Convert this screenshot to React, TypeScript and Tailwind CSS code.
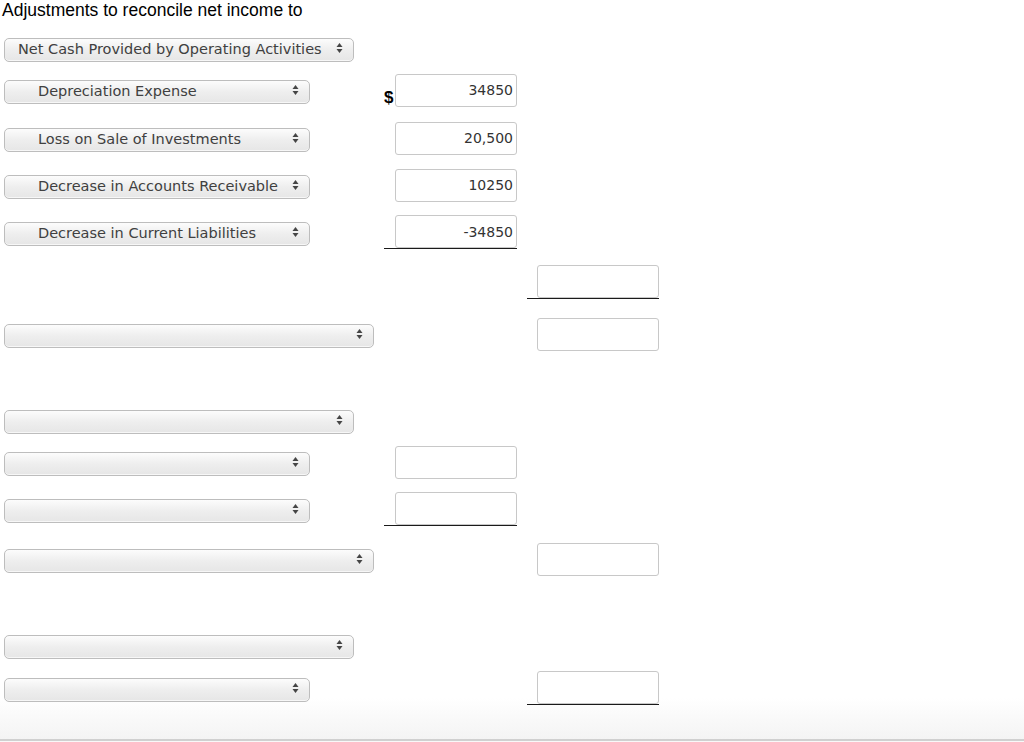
type Cell = { value?: string; dollar?: boolean; line?: boolean }

interface RowSpec {
  mt: string
  select?: { w: string; label?: string; indent?: boolean }
  c1?: Cell
  c2?: Cell
}

const ROWS: RowSpec[] = [
  { mt: 'mt-[10px]', select: { w: 'w-[350px]', label: 'Net Cash Provided by Operating Activities' } },
  { mt: 'mt-[6px]', select: { w: 'w-[306px]', label: 'Depreciation Expense', indent: true }, c1: { value: '34850', dollar: true } },
  { mt: 'mt-[12px]', select: { w: 'w-[306px]', label: 'Loss on Sale of Investments', indent: true }, c1: { value: '20,500' } },
  { mt: 'mt-[11px]', select: { w: 'w-[306px]', label: 'Decrease in Accounts Receivable', indent: true }, c1: { value: '10250' } },
  { mt: 'mt-[11px]', select: { w: 'w-[306px]', label: 'Decrease in Current Liabilities', indent: true }, c1: { value: '-34850', line: true } },
  { mt: 'mt-[14px]', c2: { line: true } },
  { mt: 'mt-[16px]', select: { w: 'w-[370px]' }, c2: {} },
  { mt: 'mt-[50px]', select: { w: 'w-[350px]' } },
  { mt: 'mt-[6px]', select: { w: 'w-[306px]' }, c1: {} },
  { mt: 'mt-[11px]', select: { w: 'w-[306px]' }, c1: { line: true } },
  { mt: 'mt-[14px]', select: { w: 'w-[370px]' }, c2: {} },
  { mt: 'mt-[50px]', select: { w: 'w-[350px]' } },
  { mt: 'mt-[7px]', select: { w: 'w-[306px]' }, c2: { line: true } },
]

function Arrows() {
  return (
    <svg width="7" height="11" viewBox="0 0 7 11" className="pointer-events-none absolute right-[11px] top-1/2 -translate-y-1/2">
      <path d="M0.5 4.5 L3.5 0.5 L6.5 4.5 Z" fill="#454545" />
      <path d="M0.5 6.5 L6.5 6.5 L3.5 10.5 Z" fill="#454545" />
    </svg>
  )
}

function FakeSelect({ w, label, indent }: { w: string; label?: string; indent?: boolean }) {
  return (
    <div className={`relative h-[24px] ${w}`}>
      <select
        defaultValue={label ?? ''}
        className={`h-full w-full appearance-none rounded-[5px] border border-[#bdbdbd] bg-gradient-to-b from-[#fcfcfc] via-[#eeeeee] to-[#e6e6e6] text-[14.5px] text-[#404040] shadow-[inset_0_-1px_0_#f7f7f7] outline-none font-['DejaVu_Sans',Verdana,sans-serif] ${indent ? 'pl-[33px]' : 'pl-[13px]'}`}
      >
        <option value={label ?? ''}>{label ?? ''}</option>
      </select>
      <Arrows />
    </div>
  )
}

function Box({ value }: { value?: string }) {
  return (
    <input
      readOnly
      defaultValue={value ?? ''}
      className="h-[33px] w-[122px] rounded-[3px] border border-[#c8c8c8] bg-white pr-[3px] text-right text-[14px] text-[#333] outline-none font-['DejaVu_Sans',Verdana,sans-serif]"
    />
  )
}

function AmountCell({ cell, w }: { cell?: Cell; w: string }) {
  if (!cell) return <div className={`shrink-0 ${w}`} />
  return (
    <div className={`flex shrink-0 items-end justify-between ${w} ${cell.line ? 'border-b border-[#1a1a1a]' : ''}`}>
      <span className="text-[17px] leading-[19px] font-bold text-black font-['Liberation_Sans',Arial,sans-serif]">
        {cell.dollar ? '$' : ''}
      </span>
      <Box value={cell.value} />
    </div>
  )
}

export default function App() {
  return (
    <div className="h-[742px] w-full overflow-hidden bg-[linear-gradient(to_bottom,#ffffff_0px,#ffffff_698px,#f4f4f4_739px,#d0d0d0_739px,#d0d0d0_741px,#f8f8f8_741px)]">
      <div className="h-[20px] pl-[2px] text-[17.5px] leading-[20px] text-black font-['Liberation_Sans',Arial,sans-serif]">
        Adjustments to reconcile net income to
      </div>
      {ROWS.map((r, i) => (
        <div key={i} className={`flex h-[36px] items-center pl-[4px] ${r.mt}`}>
          <div className="w-[380px] shrink-0">
            {r.select && <FakeSelect {...r.select} />}
          </div>
          <AmountCell cell={r.c1} w="w-[133px]" />
          <div className="w-[10px] shrink-0" />
          <AmountCell cell={r.c2} w="w-[132px]" />
        </div>
      ))}
    </div>
  )
}
